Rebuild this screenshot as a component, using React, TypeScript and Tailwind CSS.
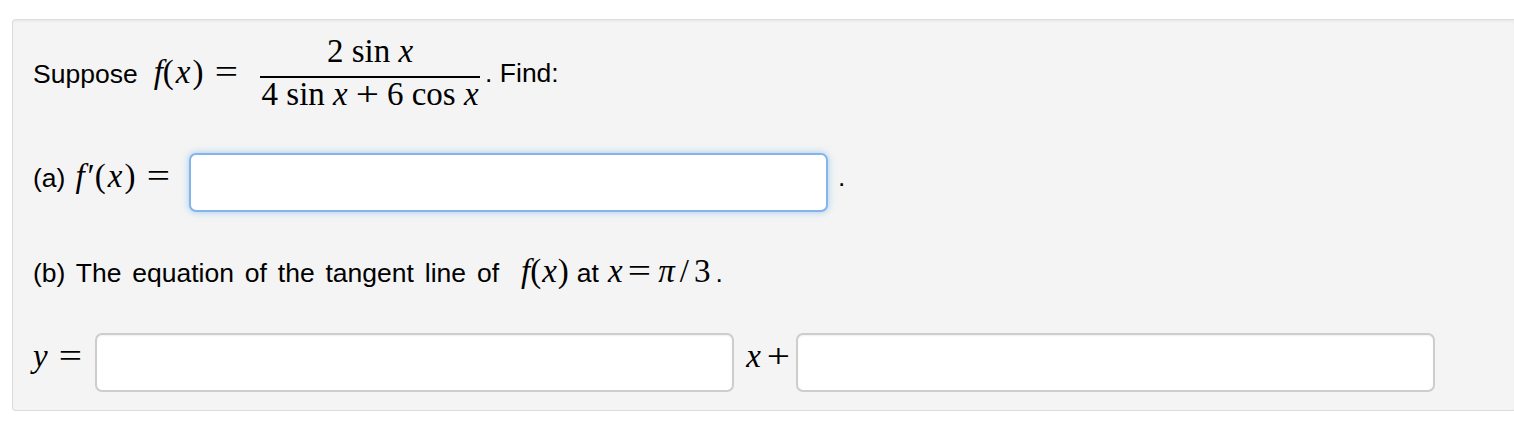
import React from 'react';

const Math = ({ children, className = '' }: { children: React.ReactNode; className?: string }) => (
  <span className={`font-['Liberation_Serif',serif] text-[33px] leading-[31px] whitespace-pre ${className}`}>
    {children}
  </span>
);

const V = ({ children }: { children: React.ReactNode }) => <i className="italic">{children}</i>;

const Eq = ({ className = 'mx-[12px]' }: { className?: string }) => (
  <span className={`inline-block scale-x-125 ${className}`}>=</span>
);

const Answer = ({ active = false }: { active?: boolean }) => (
  <div
    className={
      active
        ? 'w-[639px] h-[59px] rounded-[7px] border-2 border-[#86b4ea] bg-white shadow-[0_0_7px_rgba(82,168,236,0.55)]'
        : 'w-[639px] h-[59px] rounded-[7px] border-2 border-[#cdcdcd] bg-white shadow-[inset_0_1px_2px_rgba(0,0,0,0.06)]'
    }
  />
);

export default function App() {
  return (
    <div className="h-[436px] w-[1514px] overflow-hidden bg-white pt-[19px] pl-[12px] font-['Liberation_Sans',Arial,sans-serif] text-black">
      <div className="h-[392px] rounded-l-[4px] border border-r-0 border-[#dcdcdc] bg-[#f4f4f4] pl-[20px] pt-[16px] shadow-[inset_0_2px_2px_rgba(0,0,0,0.04)]">
        {/* intro line */}
        <div className="flex items-center">
          <div className="flex items-baseline mt-[2px]">
            <span className="text-[26.5px] leading-[31px]">Suppose</span>
            <Math className="ml-[16px]">
              <V>f</V>(<span className="mx-[2px]"><V>x</V></span>)
            </Math>
            <Math>
              <Eq className="mx-[14px]" />
            </Math>
          </div>
          <div className="flex flex-col items-center w-[220px] ml-[10px]">
            <Math>
              2 sin <V>x</V>
            </Math>
            <div className="h-[1.5px] w-full bg-black mt-[9px]" />
            <Math className="mt-[1px]">
              4 sin <V>x</V> <span className="inline-block scale-x-125 mx-[2px]">+</span> 6 cos <V>x</V>
            </Math>
          </div>
          <div className="flex items-baseline mt-[2px]">
            <span className="text-[26.5px] leading-[31px] ml-[5px]">. Find:</span>
          </div>
        </div>

        {/* (a) */}
        <div className="flex items-center h-[59px] mt-[43px]">
          <div className="flex items-baseline mb-[9px]">
            <span className="text-[26.5px] leading-[31px]">(a)</span>
            <Math className="ml-[10px]">
              <V>f</V>
              <span className="ml-[3px]">′</span>(<span className="mx-[2px]"><V>x</V></span>)
            </Math>
            <Math>
              <Eq className="ml-[14px] mr-[13px]" />
            </Math>
          </div>
          <div className="ml-[8px]">
            <Answer active />
          </div>
          <span className="text-[26.5px] leading-[31px] ml-[10px] mb-[9px]">.</span>
        </div>

        {/* (b) */}
        <div className="flex items-baseline mt-[44px]">
          <span className="text-[26.5px] leading-[31px] [word-spacing:3.5px]">
            (b) The equation of the tangent line of
          </span>
          <Math className="ml-[22px]">
            <V>f</V>(<span className="mx-[1px]"><V>x</V></span>)
          </Math>
          <span className="text-[26.5px] leading-[31px] ml-[8px]">at</span>
          <Math className="ml-[9px]">
            <V>x</V>
            <Eq className="ml-[7px] mr-[10px]" />
            <V>π</V>
            <span className="mx-[5px]">/</span>3
          </Math>
          <span className="text-[26.5px] leading-[31px] ml-[5px]">.</span>
        </div>

        {/* y = mx + b */}
        <div className="flex items-center h-[59px] mt-[44px]">
          <Math className="mb-[11px]">
            <V>y</V>
            <Eq className="ml-[13px]" />
          </Math>
          <div className="ml-[16px]">
            <Answer />
          </div>
          <Math className="ml-[12px] mb-[11px]">
            <V>x</V>
            <span className="inline-block scale-x-125 ml-[8px]">+</span>
          </Math>
          <div className="ml-[8px]">
            <Answer />
          </div>
        </div>
      </div>
    </div>
  );
}
